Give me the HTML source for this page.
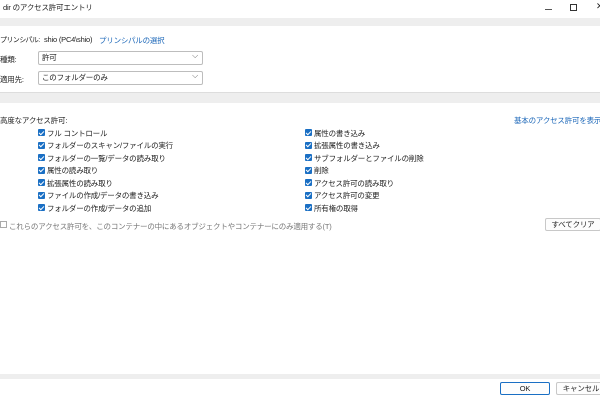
<!DOCTYPE html><html><head><meta charset="utf-8"><style>
*{margin:0;padding:0;box-sizing:border-box}
body{width:600px;height:400px;overflow:hidden;background:#fff;font-family:"Liberation Sans","Noto Sans CJK JP",sans-serif;font-size:7.5px;letter-spacing:-0.2px;color:#222;position:relative}
.a{position:absolute;white-space:nowrap}
.g{position:absolute;left:0;width:600px;background:#eeeeee}
.sel{position:absolute;left:38px;width:165px;height:14px;border:1px solid #bdbdbd;border-radius:2px;padding-left:3px;line-height:12px;background:#fff}
.sel:after{content:"⌵";position:absolute;right:4px;top:-2px;color:#666;font-size:8px}
.cb{position:absolute;width:7px;height:7px;background:#1a6fc4;border-radius:1px}
.cb:after{content:"";position:absolute;left:2px;top:0.5px;width:2px;height:4px;border:solid #fff;border-width:0 1px 1px 0;transform:rotate(45deg)}
.link{color:#1a66b8}
.btn{position:absolute;height:13px;border:1px solid #c8c8c8;border-radius:2px;background:#fdfdfd;text-align:center;line-height:11px}
</style></head><body>
<div class="a" style="left:3px;top:2px">dir のアクセス許可エントリ</div>
<div class="a" style="left:545px;top:9px;width:7px;height:1px;background:#555"></div>
<div class="a" style="left:570px;top:4px;width:7px;height:7px;border:1px solid #333"></div>
<div class="a" style="left:596px;top:1px;font-size:9px">✕</div>
<div class="g" style="top:18px;height:8px"></div>
<div class="a" style="left:0;top:35px;letter-spacing:-0.6px;font-size:7px">プリンシパル:</div>
<div class="a" style="left:44px;top:35px">shio (PC4\shio)</div>
<div class="a link" style="left:99px;top:35px">プリンシパルの選択</div>
<div class="a" style="left:0;top:54px">種類:</div>
<div class="sel" style="top:51px">許可</div>
<div class="a" style="left:0;top:74px">適用先:</div>
<div class="sel" style="top:71px">このフォルダーのみ</div>
<div class="g" style="top:92px;height:11px;border-top:1px solid #ddd"></div>
<div class="a" style="left:0;top:115px">高度なアクセス許可:</div>
<div class="a link" style="left:514px;top:115px">基本のアクセス許可を表示する</div>
<div id="c"></div>
<div class="a" style="left:0;top:221px;width:7px;height:7px;border:1px solid #aaa"></div>
<div class="a" style="left:9px;top:221px;color:#777">これらのアクセス許可を、このコンテナーの中にあるオブジェクトやコンテナーにのみ適用する(T)</div>
<div class="btn" style="left:545px;top:218px;width:56px">すべてクリア</div>
<div class="g" style="top:374px;height:5px"></div>
<div class="btn" style="left:500px;top:382px;width:50px;border-color:#1a6fc4">OK</div>
<div class="btn" style="left:556px;top:382px;width:50px">キャンセル</div>
<script>
var L=["フル コントロール","フォルダーのスキャン/ファイルの実行","フォルダーの一覧/データの読み取り","属性の読み取り","拡張属性の読み取り","ファイルの作成/データの書き込み","フォルダーの作成/データの追加"];
var R=["属性の書き込み","拡張属性の書き込み","サブフォルダーとファイルの削除","削除","アクセス許可の読み取り","アクセス許可の変更","所有権の取得"];
var h="";for(var i=0;i<7;i++){var y=129+i*12.5;
h+='<div class="cb" style="left:38px;top:'+y+'px"></div><div class="a" style="left:47px;top:'+(y-1.5)+'px">'+L[i]+'</div>';
h+='<div class="cb" style="left:305px;top:'+y+'px"></div><div class="a" style="left:314px;top:'+(y-1.5)+'px">'+R[i]+'</div>';}
document.getElementById("c").innerHTML=h;
</script>
</body></html>
